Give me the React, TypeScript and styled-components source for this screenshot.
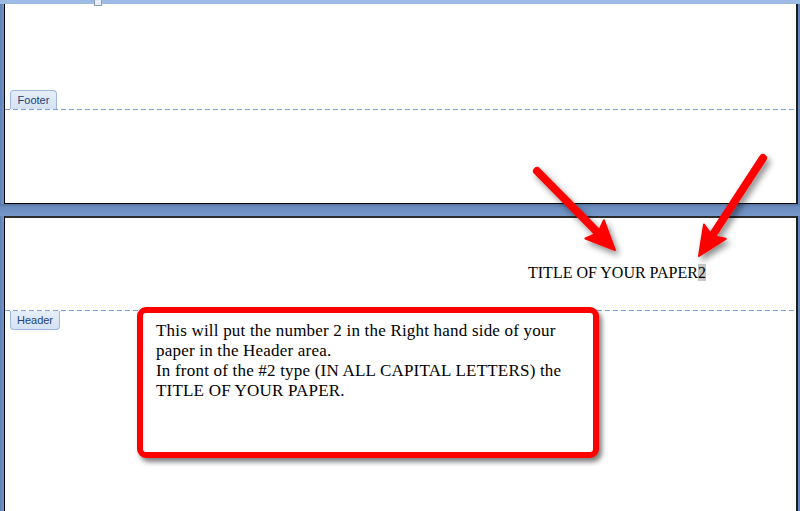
import React from 'react';
import styled, { createGlobalStyle } from 'styled-components';

const GlobalStyle = createGlobalStyle`
  html, body {
    margin: 0;
    padding: 0;
    overflow: hidden;
  }
`;

const Workspace = styled.div`
  position: relative;
  width: 800px;
  height: 511px;
  background: linear-gradient(90deg, #5f80b4 0px, #7396c9 4px, #7396c9 796px, #5f80b4 800px);
  display: flex;
  flex-direction: column;
  overflow: hidden;
`;

const RulerStrip = styled.div`
  position: relative;
  height: 4px;
  background: #9dbbe4;
  flex-shrink: 0;
`;

const RulerMarker = styled.div`
  position: absolute;
  left: 94px;
  top: -1px;
  width: 6px;
  height: 5px;
  background: #e8eef7;
  border: 1px solid #8d9db5;
`;

const Page = styled.div<{ $top?: boolean }>`
  margin: 0 2px 0 4px;
  background: #fff;
  border-left: 1px solid #000;
  border-right: 2px solid #1c1c1c;
  border-top: ${p => (p.$top ? 'none' : '2px solid #2b2b2b')};
  border-bottom: ${p => (p.$top ? '1px solid #000' : 'none')};
  display: flex;
  flex-direction: column;
  flex-shrink: 0;
`;

const PageGap = styled.div`
  height: 12px;
  flex-shrink: 0;
  background: linear-gradient(180deg, #55749f 0px, #6a8cbd 3px, #7598ca 12px);
`;

const Spacer = styled.div<{ $h: number }>`
  height: ${p => p.$h}px;
`;

const Dashed = styled.div`
  height: 1px;
  background-image: repeating-linear-gradient(90deg, #7ea0d6 0 5px, transparent 5px 8px);
`;

const Tab = styled.div<{ $below?: boolean; $w: number }>`
  margin-left: 5px;
  width: ${p => p.$w}px;
  height: 19px;
  box-sizing: border-box;
  background: linear-gradient(180deg, #e6eef9, #d4e2f4);
  border: 1px solid #9fb9de;
  border-radius: ${p => (p.$below ? '0 0 4px 4px' : '4px 4px 0 0')};
  border-top: ${p => (p.$below ? 'none' : '1px solid #9fb9de')};
  border-bottom: ${p => (p.$below ? '1px solid #9fb9de' : 'none')};
  font-family: 'Liberation Sans', Arial, sans-serif;
  font-size: 11px;
  color: #20407a;
  display: flex;
  align-items: center;
  justify-content: center;
`;

const HeaderArea = styled.div`
  height: 92px;
  display: flex;
  flex-direction: column;
`;

const TitleLine = styled.div`
  margin-top: 46px;
  padding-left: 523px;
  font-family: 'Liberation Serif', 'Times New Roman', serif;
  font-size: 16px;
  line-height: 18px;
  color: #000;
`;

const PageNum = styled.span`
  background: #c6c6c6;
`;

const Callout = styled.div`
  position: absolute;
  left: 137px;
  top: 307px;
  width: 462px;
  height: 151px;
  box-sizing: border-box;
  border: 6px solid #ff0000;
  border-radius: 9px;
  background: #fff;
  box-shadow: 3px 4px 5px rgba(0, 0, 0, 0.5);
  padding: 8px 10px 0 13px;
  font-family: 'Liberation Serif', 'Times New Roman', serif;
  font-size: 17px;
  letter-spacing: 0.2px;
  line-height: 20px;
  color: #000;
  white-space: nowrap;
`;

const ArrowLayer = styled.svg`
  position: absolute;
  left: 0;
  top: 0;
  pointer-events: none;
`;

type ArrowProps = { x1: number; y1: number; x2: number; y2: number };

// red pointer: rounded shaft plus a swept-back head at (x2, y2)
const Arrow = ({ x1, y1, x2, y2 }: ArrowProps) => {
  const len = Math.hypot(x2 - x1, y2 - y1);
  const dx = (x2 - x1) / len;
  const dy = (y2 - y1) / len;
  const headLen = 24;
  const half = 13;
  const bx = x2 - dx * headLen;
  const by = y2 - dy * headLen;
  const nx = -dy;
  const ny = dx;
  const pts = [
    `${x2},${y2}`,
    `${bx + nx * half - dx * 5},${by + ny * half - dy * 5}`,
    `${bx},${by}`,
    `${bx - nx * half - dx * 5},${by - ny * half - dy * 5}`,
  ].join(' ');
  return (
    <g filter="url(#arrowShadow)">
      <line
        x1={x1}
        y1={y1}
        x2={bx + dx * 2}
        y2={by + dy * 2}
        stroke="#ff0000"
        strokeWidth={8}
        strokeLinecap="round"
      />
      <polygon points={pts} fill="#ff0000" stroke="#ff0000" strokeWidth={2} strokeLinejoin="round" />
    </g>
  );
};

export default function App() {
  return (
    <>
      <GlobalStyle />
      <Workspace>
        <RulerStrip>
          <RulerMarker />
        </RulerStrip>

        <Page $top style={{ height: 199 }}>
          <Spacer $h={86} />
          <Tab $w={47}>Footer</Tab>
          <Dashed />
        </Page>

        <PageGap />

        <Page style={{ flex: 1 }}>
          <HeaderArea>
            <TitleLine>
              TITLE OF YOUR PAPER<PageNum>2</PageNum>
            </TitleLine>
          </HeaderArea>
          <Dashed />
          <Tab $below $w={50}>Header</Tab>
        </Page>

        <Callout>
          This will put the number 2 in the Right hand side of your
          <br />
          paper in the Header area.
          <br />
          In front of the #2 type (IN ALL CAPITAL LETTERS) the
          <br />
          TITLE OF YOUR PAPER.
        </Callout>

        <ArrowLayer width={800} height={511} viewBox="0 0 800 511">
          <defs>
            <filter id="arrowShadow" x="-20%" y="-20%" width="140%" height="140%">
              <feDropShadow dx="3" dy="4" stdDeviation="3" floodColor="#000" floodOpacity="0.45" />
            </filter>
          </defs>
          <Arrow x1={537} y1={171} x2={615} y2={250} />
          <Arrow x1={763} y1={158} x2={699} y2={256} />
        </ArrowLayer>
      </Workspace>
    </>
  );
}
